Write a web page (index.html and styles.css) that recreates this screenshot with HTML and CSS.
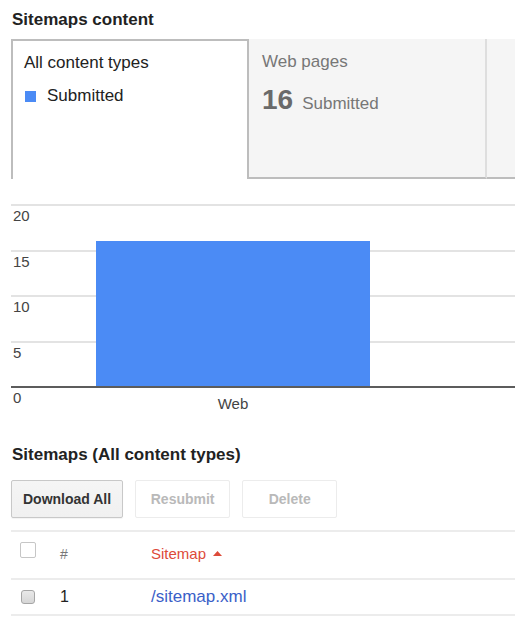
FILE: index.html
```html
<!DOCTYPE html>
<html lang="en">
<head>
<meta charset="utf-8">
<title>Sitemaps content</title>
<link rel="stylesheet" href="styles.css">
</head>
<body>
<div class="page">
  <h2 class="title">Sitemaps content</h2>
  <div class="tabs">
    <div class="tab tab-active">
      <div class="tab-label">All content types</div>
      <div class="legend"><span class="swatch"></span><span>Submitted</span></div>
    </div>
    <div class="tab tab-inactive">
      <div class="tab-label">Web pages</div>
      <div class="stat"><span class="stat-num">16</span><span class="stat-text">Submitted</span></div>
    </div>
    <div class="tab tab-inactive tab-last"></div>
  </div>

  <div class="chart">
    <div class="gridlines">
      <div class="gl"><span>20</span></div>
      <div class="gl"><span>15</span></div>
      <div class="gl"><span>10</span></div>
      <div class="gl"><span>5</span></div>
    </div>
    <div class="bars"><div class="bar"></div></div>
    <div class="axis">
      <span class="axis-zero">0</span>
      <span class="axis-cat">Web</span>
    </div>
  </div>

  <h2 class="title title-2">Sitemaps (All content types)</h2>
  <div class="actions">
    <button class="btn btn-primary">Download All</button>
    <button class="btn btn-disabled">Resubmit</button>
    <button class="btn btn-disabled">Delete</button>
  </div>

  <div class="table">
    <div class="row row-head">
      <div class="c-check"><span class="cb cb-head"></span></div>
      <div class="c-num">#</div>
      <div class="c-name sort">Sitemap <svg class="sort-arrow" width="9" height="5" viewBox="0 0 9 5"><polygon points="0,5 4.5,0 9,5" fill="#dd4b39"/></svg></div>
    </div>
    <div class="row row-body">
      <div class="c-check"><span class="cb cb-row"></span></div>
      <div class="c-num num-val">1</div>
      <div class="c-name"><a class="link" href="#">/sitemap.xml</a></div>
    </div>
  </div>
</div>
</body>
</html>
```

FILE: styles.css
```css
html, body {
  margin: 0;
  padding: 0;
  background: #fff;
  overflow: hidden;
}
body {
  font-family: "Liberation Sans", Arial, sans-serif;
  color: #222;
  width: 515px;
  height: 629px;
}
.page {
  box-sizing: border-box;
  width: 515px;
  padding-left: 11px;
  overflow: hidden;
}
.title {
  margin: 0;
  padding: 10px 0 0 1px;
  font-size: 17px;
  font-weight: bold;
  line-height: 20px;
  color: #222;
}

/* tabs */
.tabs {
  display: flex;
  margin-top: 9px;
  overflow: hidden;
}
.tab {
  box-sizing: border-box;
  width: 238px;
  height: 140px;
  flex: none;
}
.tab-active {
  background: #fff;
  border: 2px solid #bdbdbd;
  border-bottom: none;
  padding: 12px 11px 0 11px;
}
.tab-inactive {
  background: #f5f5f5;
  border-bottom: 2px solid #bdbdbd;
  border-right: 2px solid #dedede;
  padding: 13px 13px 0 13px;
}
.tab-last {
  border-right: none;
}
.tab-label {
  font-size: 17px;
  line-height: 20px;
  color: #222;
}
.tab-inactive .tab-label {
  color: #777;
}
.legend {
  display: flex;
  align-items: center;
  margin-top: 13px;
  font-size: 17px;
  line-height: 20px;
  color: #222;
}
.swatch {
  width: 11px;
  height: 11px;
  background: #4b8bf5;
  margin: 0 11px 0 1px;
}
.stat {
  display: flex;
  align-items: baseline;
  margin-top: 12px;
}
.stat-num {
  font-size: 28px;
  font-weight: bold;
  line-height: 32px;
  color: #6a6a6a;
}
.stat-text {
  font-size: 17px;
  color: #777;
  margin-left: 9px;
}

/* chart */
.chart {
  display: grid;
  grid-template-rows: 182px auto;
  margin-top: 25px;
}
.gridlines {
  grid-area: 1 / 1;
  display: flex;
  flex-direction: column;
}
.gl {
  box-sizing: border-box;
  height: 45.5px;
  border-top: 2px solid #e3e3e3;
  padding: 1px 0 0 2px;
  font-size: 15px;
  line-height: 17px;
  color: #444;
}
.bars {
  grid-area: 1 / 1;
  display: flex;
  align-items: flex-end;
  padding-left: 85px;
}
.bar {
  width: 274px;
  height: 145px;
  background: #4b8bf5;
}
.axis {
  grid-area: 2 / 1;
  display: flex;
  box-sizing: border-box;
  height: 26px;
  border-top: 2px solid #5c5c5c;
  font-size: 15px;
  line-height: 17px;
  color: #444;
}
.axis-zero {
  box-sizing: border-box;
  width: 85px;
  padding: 1px 0 0 2px;
}
.axis-cat {
  width: 274px;
  text-align: center;
  padding-top: 7px;
}

/* second section */
.title-2 {
  padding-top: 0;
  margin-top: 33px;
}
.actions {
  display: flex;
  gap: 12px;
  margin-top: 15px;
}
.btn {
  box-sizing: border-box;
  height: 38px;
  min-width: 95px;
  padding: 0 11px;
  font-family: "Liberation Sans", Arial, sans-serif;
  font-size: 14px;
  font-weight: bold;
  border-radius: 2px;
  cursor: default;
}
.btn-primary {
  background: linear-gradient(#f5f5f5, #f0f0f0);
  border: 1px solid #c8c8c8;
  color: #333;
  box-shadow: 0 1px 1px rgba(0, 0, 0, 0.05);
}
.btn-disabled {
  background: #fff;
  border: 1px solid #ececec;
  color: #b9b9b9;
}

/* table */
.table {
  margin-top: 12px;
  border-bottom: 2px solid #ececec;
}
.row {
  display: flex;
  border-top: 2px solid #ececec;
}
.row-head {
  height: 46px;
  align-items: flex-start;
}
.row-body {
  height: 34px;
  align-items: center;
}
.c-check {
  width: 40px;
  padding-left: 9px;
  display: flex;
}
.c-num {
  width: 91px;
}
.row-head .c-check {
  padding-top: 10px;
}
.row-head .c-num {
  padding-top: 13px;
  font-size: 14px;
  line-height: 18px;
  color: #777;
}
.row-head .c-name {
  padding-top: 13px;
  font-size: 15px;
  line-height: 18px;
  color: #dd4b39;
  display: flex;
  align-items: center;
}
.sort-arrow {
  margin-left: 7px;
  margin-top: -1px;
}
.cb {
  display: block;
  box-sizing: border-box;
}
.cb-head {
  width: 16px;
  height: 16px;
  border: 1px solid #c6c6c6;
  border-radius: 2px;
  background: #fff;
}
.cb-row {
  width: 14px;
  height: 14px;
  margin-left: 1px;
  border: 1px solid #a6a6a6;
  border-radius: 3px;
  background: linear-gradient(#e9e9e9, #d6d6d6);
}
.num-val {
  font-size: 16px;
  line-height: 20px;
  color: #222;
}
.link {
  font-size: 17px;
  line-height: 20px;
  color: #3a60c8;
  text-decoration: none;
}
```
